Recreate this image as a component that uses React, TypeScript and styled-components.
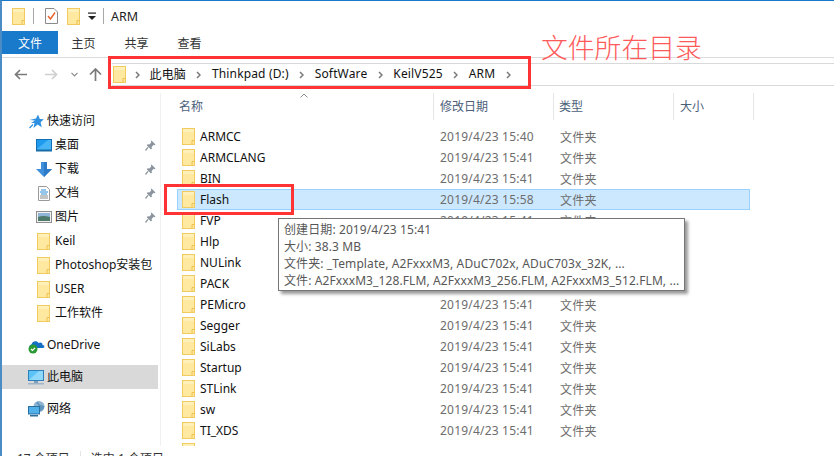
import { FC } from 'react';
import styled, { createGlobalStyle } from 'styled-components';

const GlobalStyle = createGlobalStyle`
	html, body {
		margin: 0;
		padding: 0;
		background: #fff;
	}
	* {
		box-sizing: border-box;
	}
`;

const Page = styled.div`
	position: relative;
	display: flex;
	flex-direction: column;
	width: 834px;
	height: 456px;
	overflow: hidden;
	background: #fff;
	border-top: 1px solid #1979ca;
	border-left: 2px solid #4b8cc4;
	font-family: 'Noto Sans', 'Noto Sans CJK SC', sans-serif;
	font-size: 12px;
	color: #1a1a1a;
`;

const TitleBar = styled.div`
	display: flex;
	align-items: center;
	height: 30px;
	padding-left: 10px;
	flex-shrink: 0;
`;

const TitleDivider = styled.div<{ $left: number; $right: number }>`
	width: 1px;
	height: 16px;
	background: #a8a8a8;
	margin: 0 ${(p) => p.$right}px 0 ${(p) => p.$left}px;
`;

const QuickFolder = styled.span`
	display: flex;
	margin: 0 8px 0 9px;
`;

const TitleText = styled.span`
	font-size: 12.5px;
	color: #222;
`;

const Tabs = styled.div`
	display: flex;
	align-items: flex-start;
	height: 27px;
	border-bottom: 1px solid #dadbdc;
	flex-shrink: 0;
`;

const FileTab = styled.div`
	display: flex;
	align-items: center;
	justify-content: center;
	width: 56px;
	height: 23px;
	margin-right: -1px;
	background: #1979ca;
	color: #fff;
`;

const Tab = styled.div`
	display: flex;
	align-items: center;
	justify-content: center;
	width: 53px;
	height: 23px;
	color: #333;
`;

const Nav = styled.div`
	display: flex;
	height: 35px;
	padding-top: 5px;
	flex-shrink: 0;
`;

const NavButtons = styled.div`
	display: flex;
	align-items: center;
	width: 110px;
	height: 23px;
	padding-left: 10px;
`;

const NavButton = styled.span<{ $width: number; $left?: number }>`
	display: flex;
	justify-content: center;
	width: ${(p) => p.$width}px;
	margin-left: ${(p) => p.$left ?? 0}px;
`;

const AddressBar = styled.div`
	display: flex;
	align-items: center;
	flex: 1;
	height: 23px;
	padding-left: 1px;
	border-top: 1px solid #d9d9d9;
	border-bottom: 1px solid #d9d9d9;
`;

const Crumb = styled.span`
	margin-top: -2px;
	color: #111;
	letter-spacing: 0.15px;
	white-space: nowrap;
`;

const Chevron = styled.svg<{ $tight?: boolean }>`
	margin: 0 10.5px 0 ${(p) => (p.$tight ? 9 : 10.5)}px;
	margin-right: ${(p) => (p.$tight ? 9.5 : 10.5)}px;
	flex-shrink: 0;
`;

const Body = styled.div`
	display: flex;
	height: 353px;
	flex-shrink: 0;
	overflow: hidden;
`;

const Sidebar = styled.div`
	width: 159px;
	padding: 16px 2px 0 0;
	border-right: 1px solid #f0f0f0;
	flex-shrink: 0;
`;

const TreeGroup = styled.div`
	margin-bottom: 8px;
`;

const TreeRow = styled.div<{ $indent?: boolean; $active?: boolean }>`
	display: flex;
	align-items: center;
	height: 24px;
	padding-left: ${(p) => (p.$indent ? 30 : 23)}px;
	background: ${(p) => (p.$active ? '#d9d9d9' : 'transparent')};
	white-space: nowrap;
	color: #111;
`;

const TreeLabel = styled.span`
	margin-top: -2px;
`;

const TreeIcon = styled.span<{ $indent?: boolean }>`
	display: flex;
	align-items: center;
	justify-content: center;
	width: ${(p) => (p.$indent ? 23 : 22)}px;
	flex-shrink: 0;
`;

const PinSlot = styled.span`
	margin-left: auto;
	display: flex;
	margin-right: 2px;
`;

const Main = styled.div`
	flex: 1;
	padding-left: 16px;
	min-width: 0;
`;

const ListHeader = styled.div`
	position: relative;
	display: grid;
	grid-template-columns: 257px 120px 120px 80px;
	width: 577px;
	height: 27px;
	margin-bottom: 6px;
`;

const HeaderCell = styled.div<{ $pad: number }>`
	display: flex;
	align-items: center;
	padding: 0 0 2px ${(p) => p.$pad}px;
	border-right: 1px solid #e5e5e5;
	color: #4c607a;
`;

const SortCaret = styled.svg`
	position: absolute;
	left: 123px;
	top: 0;
`;

const Row = styled.div<{ $selected?: boolean }>`
	display: grid;
	grid-template-columns: 257px 120px 120px 76px;
	align-items: center;
	width: 573px;
	height: 21px;
	background: ${(p) => (p.$selected ? '#cce8ff' : 'transparent')};
	box-shadow: ${(p) => (p.$selected ? 'inset 0 0 0 1px #99d1ff' : 'none')};
`;

const NameCell = styled.div`
	display: flex;
	align-items: center;
	gap: 5px;
	padding-left: 5px;
	color: #111;
`;

const MetaCell = styled.div`
	padding-left: 6px;
	color: #6d6d6d;
	letter-spacing: 0.2px;
	white-space: nowrap;
`;

const StatusBar = styled.div`
	display: flex;
	align-items: center;
	height: 20px;
	padding: 4px 0 0 15px;
	flex-shrink: 0;
	color: #333;
`;

const StatusDivider = styled.span`
	width: 1px;
	height: 14px;
	background: #e5e5e5;
	margin: 0 10px;
`;

const Tooltip = styled.div`
	position: absolute;
	left: 276px;
	top: 217px;
	width: 407px;
	height: 73px;
	padding: 2px 5px;
	background: #fff;
	border: 1px solid #767676;
	box-shadow: 3px 3px 3px rgba(0, 0, 0, 0.4);
	color: #575757;
	letter-spacing: 0.1px;
	z-index: 2;
`;

const TooltipLine = styled.div`
	height: 17px;
	line-height: 17px;
	white-space: nowrap;
`;

const RedBox = styled.div<{ $left: number; $top: number; $width: number; $height: number }>`
	position: absolute;
	left: ${(p) => p.$left}px;
	top: ${(p) => p.$top}px;
	width: ${(p) => p.$width}px;
	height: ${(p) => p.$height}px;
	border: 3px solid #ff3333;
	z-index: 3;
`;

const Annotation = styled.div`
	position: absolute;
	left: 539px;
	top: 28px;
	font-family: 'Noto Sans CJK SC', sans-serif;
	font-weight: 300;
	font-size: 26.8px;
	line-height: 36px;
	color: #ff5a5a;
	white-space: nowrap;
	z-index: 3;
`;

const FolderIcon: FC = () => (
	<svg width="13" height="17" viewBox="0 0 13 17">
		<rect x="0.5" y="0.5" width="12" height="16" fill="#ffe9a1" stroke="#f1cb5f" />
		<rect x="1" y="1" width="11" height="3" fill="#ffefb8" />
		<path d="M10 16V12.5H12.5" fill="none" stroke="#eec04c" />
	</svg>
);

const CrumbChevron: FC<{ tight?: boolean }> = ({ tight }) => (
	<Chevron $tight={tight} width="5" height="8" viewBox="0 0 5 8">
		<path d="M1 1l3 3-3 3" fill="none" stroke="#7a7a7a" strokeWidth="1.5" />
	</Chevron>
);

const PinIcon: FC = () => (
	<svg width="11" height="11" viewBox="0 0 11 11">
		<path d="M6.5 0.5L10.5 4.5L9.5 5.2L8.7 4.8L6.6 6.9L6.9 8.8L6 9.5L1.8 5.2L2.5 4.3L4.3 4.6L6.3 2.5L5.8 1.4Z" fill="#8b949c" />
		<path d="M3.2 7.2L0.5 10.5" stroke="#8b949c" strokeWidth="1.2" />
	</svg>
);

const StarIcon: FC = () => (
	<svg width="15" height="15" viewBox="0 0 15 15">
		<path d="M9 0.5L10.8 5L14.8 5.3L11.6 8.2L12.7 13.2L8.6 10.5L4.5 14L5.5 9L2 9L6 6.5L0.5 6L7 4.6Z" fill="#2f8fe0" />
		<path d="M0.5 14L4 10.5" stroke="#2f8fe0" strokeWidth="1.2" />
	</svg>
);

const DesktopIcon: FC = () => (
	<svg width="16" height="13" viewBox="0 0 16 13">
		<rect x="0.5" y="0.5" width="15" height="11" fill="#1e9bee" stroke="#1470b5" />
		<path d="M1 10L12 1H15V11H1Z" fill="#46b4f5" />
		<rect x="0" y="10.5" width="16" height="2" fill="#176da8" />
	</svg>
);

const DownloadIcon: FC = () => (
	<svg width="16" height="15" viewBox="0 0 16 15">
		<path d="M5 0H11V7H16L8 15L0 7H5Z" fill="#3f8fdc" />
		<path d="M8 0H11V7H16L8 15Z" fill="#2f7ac6" />
	</svg>
);

const DocIcon: FC = () => (
	<svg width="12" height="15" viewBox="0 0 12 15">
		<path d="M0.5 0.5H8.5L11.5 3.5V14.5H0.5Z" fill="#fdfdfd" stroke="#9a9a9a" />
		<path d="M3 4H8M2 6H10M3 8H9" stroke="#2f8fd8" />
		<path d="M2 10H10M2 12H10" stroke="#8a8a8a" />
	</svg>
);

const PictureIcon: FC = () => (
	<svg width="16" height="12" viewBox="0 0 16 12">
		<rect x="0.5" y="0.5" width="15" height="11" fill="#f2f2f2" stroke="#8f8f8f" />
		<rect x="2" y="2" width="12" height="4" fill="#8fb6d8" />
		<path d="M2 6C5 4.5 9 4.5 14 6V10H2Z" fill="#4d7a6a" />
	</svg>
);

const CloudIcon: FC = () => (
	<svg width="17" height="17" viewBox="0 0 17 17">
		<path d="M3 11C1 11 1 7.5 3.5 7.5C4 4 9 3 10.5 6C13 4.5 15 6.5 14.5 8C17 8 17 11 15 11Z" fill="#1570c4" />
		<circle cx="5" cy="12" r="4.5" fill="#2a9a34" />
		<path d="M3 12l1.5 1.5L7 10.8" fill="none" stroke="#fff" strokeWidth="1.2" />
	</svg>
);

const ComputerIcon: FC = () => (
	<svg width="16" height="15" viewBox="0 0 16 15">
		<rect x="0.5" y="0.5" width="15" height="10" fill="#5cc3f8" stroke="#2f7fb8" />
		<path d="M1 10L11 1H15V10Z" fill="#8ed8fb" />
		<rect x="6" y="11" width="4" height="2" fill="#7d9fb8" />
		<rect x="0" y="13" width="16" height="1.5" fill="#9fb3c4" />
	</svg>
);

const NetworkIcon: FC = () => (
	<svg width="17" height="16" viewBox="0 0 17 16">
		<circle cx="11" cy="5.5" r="5.5" fill="#8fb4d0" />
		<path d="M8 2C10 3 12 6 11 10.5C14 10 16 8 16.5 5C14 5 11 4 10 0.5Z" fill="#5d93bd" />
		<rect x="0.5" y="5.5" width="11" height="7.5" fill="#4fb0ea" stroke="#2a6f9e" />
		<rect x="2" y="14" width="8" height="1.5" fill="#2a6f9e" />
	</svg>
);

const folders = [
	'ARMCC',
	'ARMCLANG',
	'BIN',
	'Flash',
	'FVP',
	'Hlp',
	'NULink',
	'PACK',
	'PEMicro',
	'Segger',
	'SiLabs',
	'Startup',
	'STLink',
	'sw',
	'TI_XDS',
	'',
];

const dateOf = (name: string): string => {
	if (name === 'ARMCC') return '2019/4/23 15:40';
	if (name === 'Flash') return '2019/4/23 15:58';
	return '2019/4/23 15:41';
};

const pinned: [string, FC][] = [
	['桌面', DesktopIcon],
	['下载', DownloadIcon],
	['文档', DocIcon],
	['图片', PictureIcon],
];

const App: FC = () => {
	return (
		<Page>
			<GlobalStyle />
			<TitleBar>
				<FolderIcon />
				<TitleDivider $left={8} $right={11} />
				<svg width="13" height="16" viewBox="0 0 13 16">
					<path d="M0.5 0.5H9L12.5 4V15.5H0.5Z" fill="#fff" stroke="#8a8a8a" />
					<path d="M3 8l2.5 3L10 4.5" fill="none" stroke="#e8622c" strokeWidth="1.4" />
				</svg>
				<QuickFolder>
					<FolderIcon />
				</QuickFolder>
				<svg width="9" height="9" viewBox="0 0 9 9">
					<rect x="0" y="0.5" width="8" height="1.2" fill="#222" />
					<path d="M0 4H8L4 8Z" fill="#222" />
				</svg>
				<TitleDivider $left={6} $right={7} />
				<TitleText>ARM</TitleText>
			</TitleBar>
			<Tabs>
				<FileTab>文件</FileTab>
				<Tab>主页</Tab>
				<Tab>共享</Tab>
				<Tab>查看</Tab>
			</Tabs>
			<Nav>
				<NavButtons>
					<NavButton $width={16}>
						<svg width="13" height="11" viewBox="0 0 13 11">
							<path d="M6 1L1.5 5.5L6 10M2 5.5H13" fill="none" stroke="#7a7a7a" strokeWidth="1.7" />
						</svg>
					</NavButton>
					<NavButton $width={16} $left={15}>
						<svg width="13" height="11" viewBox="0 0 13 11">
							<path d="M7 1L11.5 5.5L7 10M0 5.5H11" fill="none" stroke="#cfcfcf" strokeWidth="1.7" />
						</svg>
					</NavButton>
					<NavButton $width={16} $left={7}>
						<svg width="7" height="5" viewBox="0 0 7 5">
							<path d="M0.5 0.8L3.5 3.8L6.5 0.8" fill="none" stroke="#8a8a8a" strokeWidth="1.2" />
						</svg>
					</NavButton>
					<NavButton $width={20} $left={3}>
						<svg width="13" height="13" viewBox="0 0 13 13">
							<path d="M1 6.5L6.5 1L12 6.5M6.5 2V13" fill="none" stroke="#7a7a7a" strokeWidth="1.7" />
						</svg>
					</NavButton>
				</NavButtons>
				<AddressBar>
					<FolderIcon />
					<CrumbChevron tight />
					<Crumb>此电脑</Crumb>
					<CrumbChevron />
					<Crumb>Thinkpad (D:)</Crumb>
					<CrumbChevron />
					<Crumb>SoftWare</Crumb>
					<CrumbChevron />
					<Crumb>KeilV525</Crumb>
					<CrumbChevron />
					<Crumb>ARM</Crumb>
					<CrumbChevron />
				</AddressBar>
			</Nav>
			<Body>
				<Sidebar>
					<TreeGroup>
						<TreeRow>
							<TreeIcon>
								<StarIcon />
							</TreeIcon>
							<TreeLabel>快速访问</TreeLabel>
						</TreeRow>
						{pinned.map(([label, Icon]) => (
							<TreeRow key={label} $indent>
								<TreeIcon $indent>
									<Icon />
								</TreeIcon>
								<TreeLabel>{label}</TreeLabel>
								<PinSlot>
									<PinIcon />
								</PinSlot>
							</TreeRow>
						))}
						{['Keil', 'Photoshop安装包', 'USER', '工作软件'].map((label) => (
							<TreeRow key={label} $indent>
								<TreeIcon $indent>
									<FolderIcon />
								</TreeIcon>
								<TreeLabel>{label}</TreeLabel>
							</TreeRow>
						))}
					</TreeGroup>
					<TreeGroup>
						<TreeRow>
							<TreeIcon>
								<CloudIcon />
							</TreeIcon>
							<TreeLabel>OneDrive</TreeLabel>
						</TreeRow>
					</TreeGroup>
					<TreeGroup>
						<TreeRow $active>
							<TreeIcon>
								<ComputerIcon />
							</TreeIcon>
							<TreeLabel>此电脑</TreeLabel>
						</TreeRow>
					</TreeGroup>
					<TreeGroup>
						<TreeRow>
							<TreeIcon>
								<NetworkIcon />
							</TreeIcon>
							<TreeLabel>网络</TreeLabel>
						</TreeRow>
					</TreeGroup>
				</Sidebar>
				<Main>
					<ListHeader>
						<SortCaret width="8" height="5" viewBox="0 0 8 5">
							<path d="M0.5 4.5L4 1L7.5 4.5" fill="none" stroke="#8a8a8a" />
						</SortCaret>
						<HeaderCell $pad={2}>名称</HeaderCell>
						<HeaderCell $pad={6}>修改日期</HeaderCell>
						<HeaderCell $pad={5}>类型</HeaderCell>
						<HeaderCell $pad={6}>大小</HeaderCell>
					</ListHeader>
					{folders.map((name) => (
						<Row key={name || 'last'} $selected={name === 'Flash'}>
							<NameCell>
								<FolderIcon />
								{name}
							</NameCell>
							{name && <MetaCell>{dateOf(name)}</MetaCell>}
							{name && <MetaCell>文件夹</MetaCell>}
						</Row>
					))}
				</Main>
			</Body>
			<StatusBar>
				17 个项目
				<StatusDivider />
				选中 1 个项目
			</StatusBar>
			<Tooltip>
				<TooltipLine>创建日期: 2019/4/23 15:41</TooltipLine>
				<TooltipLine>大小: 38.3 MB</TooltipLine>
				<TooltipLine>文件夹: _Template, A2FxxxM3, ADuC702x, ADuC703x_32K, ...</TooltipLine>
				<TooltipLine>文件: A2FxxxM3_128.FLM, A2FxxxM3_256.FLM, A2FxxxM3_512.FLM, ...</TooltipLine>
			</Tooltip>
			<RedBox $left={106} $top={55} $width={423} $height={33} />
			<RedBox $left={162} $top={183} $width={130} $height={31} />
			<Annotation>文件所在目录</Annotation>
		</Page>
	);
};

export default App;
